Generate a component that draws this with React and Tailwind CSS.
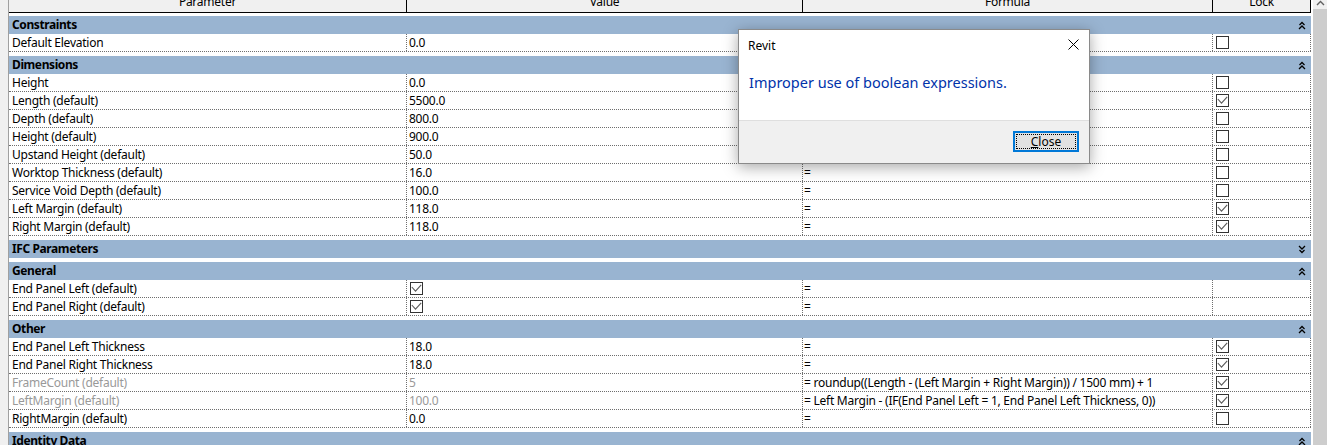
import React from "react";

const groups = [
  {
    name: "Constraints",
    open: true,
    rows: [{ p: "Default Elevation", v: "0.0", f: "=", lock: false }],
  },
  {
    name: "Dimensions",
    open: true,
    rows: [
      { p: "Height", v: "0.0", f: "=", lock: false },
      { p: "Length (default)", v: "5500.0", f: "=", lock: true },
      { p: "Depth (default)", v: "800.0", f: "=", lock: false },
      { p: "Height (default)", v: "900.0", f: "=", lock: false },
      { p: "Upstand Height (default)", v: "50.0", f: "=", lock: false },
      { p: "Worktop Thickness (default)", v: "16.0", f: "=", lock: false },
      { p: "Service Void Depth (default)", v: "100.0", f: "=", lock: false },
      { p: "Left Margin (default)", v: "118.0", f: "=", lock: true },
      { p: "Right Margin (default)", v: "118.0", f: "=", lock: true },
    ],
  },
  { name: "IFC Parameters", open: false, rows: [] },
  {
    name: "General",
    open: true,
    rows: [
      { p: "End Panel Left (default)", check: true, f: "=", lock: null },
      { p: "End Panel Right (default)", check: true, f: "=", lock: null },
    ],
  },
  {
    name: "Other",
    open: true,
    rows: [
      { p: "End Panel Left Thickness", v: "18.0", f: "=", lock: true },
      { p: "End Panel Right Thickness", v: "18.0", f: "=", lock: true },
      {
        p: "FrameCount (default)",
        v: "5",
        f: "= roundup((Length - (Left Margin + Right Margin)) / 1500 mm) + 1",
        lock: true,
        gray: true,
      },
      {
        p: "LeftMargin (default)",
        v: "100.0",
        f: "= Left Margin - (IF(End Panel Left = 1, End Panel Left Thickness, 0))",
        lock: true,
        gray: true,
      },
      { p: "RightMargin (default)", v: "0.0", f: "=", lock: false },
    ],
  },
  { name: "Identity Data", open: true, rows: [] },
];

function Check({ checked }) {
  return (
    <span className="flex h-[13px] w-[13px] items-center justify-center border border-[#333333] bg-white">
      {checked && (
        <svg width="11" height="11" viewBox="0 0 11 11">
          <path d="M0.8 4 L4.5 8.2 L10.2 1.8" stroke="#5a5a5a" strokeWidth="1.1" fill="none" />
        </svg>
      )}
    </span>
  );
}

function Chevrons({ up }) {
  return (
    <svg width="8" height="9" viewBox="0 0 8 9">
      {up ? (
        <g stroke="#000" strokeWidth="1.3" fill="none">
          <path d="M1.5 4 L4 1.5 L6.5 4" />
          <path d="M1 8 L4 5 L7 8" />
        </g>
      ) : (
        <g stroke="#000" strokeWidth="1.3" fill="none">
          <path d="M1 1 L4 4 L7 1" />
          <path d="M1.5 5 L4 7.5 L6.5 5" />
        </g>
      )}
    </svg>
  );
}

function Row({ r }) {
  const txt = r.gray ? "text-[#999999]" : "text-black";
  return (
    <div className="flex h-[18px] border-b border-dotted border-[#6e6e6e]">
      <div className={`flex w-[398px] items-center border-r border-dotted border-[#6e6e6e] pl-[3px] ${txt}`}>{r.p}</div>
      <div className={`flex w-[396px] items-center border-r border-dotted border-[#6e6e6e] pl-[2px] ${txt}`}>
        {r.check ? <span className="pl-px"><Check checked /></span> : r.v}
      </div>
      <div className="flex w-[410px] items-center border-r border-dotted border-[#6e6e6e] pl-px text-black">{r.f}</div>
      <div className="flex w-[98px] items-center border-r border-dotted border-[#6e6e6e] pl-[3px]">
        {r.lock !== null && <Check checked={r.lock} />}
      </div>
    </div>
  );
}

export default function App() {
  return (
    <div className="relative flex h-[445px] w-[1327px] overflow-hidden bg-white font-['Segoe_UI','Noto_Sans',sans-serif] text-[12px] leading-[16px] tracking-[-0.25px] text-black">
      <div className="w-[9px] shrink-0 border-r border-[#a0a0a0] bg-[#f0f0f0]" />

      <div className="w-[1302px] shrink-0">
        <div className="flex h-[13px] overflow-hidden border-b border-black bg-[#f0f0f0]">
          {[
            ["Parameter", "w-[398px]"],
            ["Value", "w-[396px]"],
            ["Formula", "w-[410px]"],
            ["Lock", "w-[98px]"],
          ].map(([t, w]) => (
            <div key={t} className={`${w} flex justify-center border-r border-black`}>
              <span className="-mt-[7px] leading-[18px]">{t}</span>
            </div>
          ))}
        </div>

        <div className="pt-[3px]">
          {groups.map((g, i) => (
            <div key={g.name} className={i === 0 ? "" : "mt-[4px]"}>
              <div className="flex h-[18px] items-center justify-between bg-[#99b4d1] pl-[3px] pr-[5px] font-bold tracking-[-0.4px]">
                <span>{g.name}</span>
                <Chevrons up={g.open} />
              </div>
              {g.rows.map((r) => (
                <Row key={r.p} r={r} />
              ))}
            </div>
          ))}
        </div>
      </div>

      <div className="w-[2px] shrink-0" />
      <div className="flex w-[14px] shrink-0 flex-col bg-[#cdcdcd]">
        <div className="flex h-[9px] justify-center bg-[#f0f0f0]">
          <svg width="9" height="6" viewBox="0 0 9 6">
            <path d="M1 5 L4.5 1.5 L8 5" stroke="#606060" strokeWidth="1.4" fill="none" />
          </svg>
        </div>
      </div>

      <div className="absolute left-[738px] top-[29px] flex h-[135px] w-[352px] flex-col border border-[#8a8a8a] bg-white tracking-normal shadow-[0_3px_14px_rgba(0,0,0,0.35)]">
        <div className="relative h-[90px]">
          <div className="pl-[9px] pt-[7px] leading-[18px]">Revit</div>
          <svg className="absolute left-[329px] top-[9px]" width="11" height="11" viewBox="0 0 11 11">
            <path d="M0.5 0.5 L10.5 10.5 M10.5 0.5 L0.5 10.5" stroke="#000" strokeWidth="1" />
          </svg>
          <div className="mt-[17px] pl-[10px] text-[14.5px] leading-[20px] text-[#0033aa]">
            Improper use of boolean expressions.
          </div>
        </div>
        <div className="flex flex-1 justify-end border-t border-[#dfdfdf] bg-[#f0f0f0] pr-[10px] pt-[10px]">
          <button className="flex h-[21px] w-[66px] items-center justify-center border-2 border-[#0078d7] bg-[#e1e1e1] p-px">
            <span className="flex h-full w-full items-center justify-center border border-dotted border-black">
              <span>
                <span className="underline">C</span>lose
              </span>
            </span>
          </button>
        </div>
      </div>
    </div>
  );
}
